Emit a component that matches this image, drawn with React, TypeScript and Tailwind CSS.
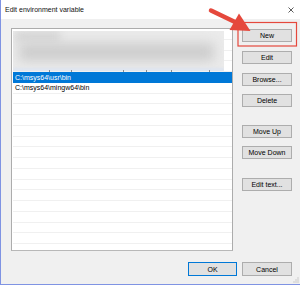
import React from "react";

function Btn({ label, className = "" }: { label: string; className?: string }) {
  return (
    <div
      className={
        "h-[13px] w-[50px] bg-[#e1e1e1] border border-[#adadad] flex items-center justify-center text-[7px] text-black " +
        className
      }
    >
      {label}
    </div>
  );
}

export default function App() {
  const emptyRows = Array.from({ length: 17 });
  const specks = [36, 58, 110, 133, 158, 196];
  return (
    <div className="relative w-[300px] h-[285px] overflow-hidden bg-[#f0f0f0] border-l border-b border-[#7f93e3] font-['Liberation_Sans',Arial,sans-serif] text-[7px] leading-none text-black">
      {/* Title bar */}
      <div className="h-[19px] bg-white flex items-center justify-between pl-[4px] pr-[6px]">
        <span className="text-[7px] text-[#111]">Edit environment variable</span>
        <svg width="6" height="6" viewBox="0 0 6 6">
          <path d="M0.5 0.5 L5.5 5.5 M5.5 0.5 L0.5 5.5" stroke="#333" strokeWidth="0.8" />
        </svg>
      </div>

      {/* Body */}
      <div className="flex pl-[10px] pt-[9px]">
        <div className="w-[222px] h-[223px] border border-[#acacac] border-b-[#b8b8b8] bg-white overflow-hidden pl-[1px]">
          {/* blurred rows */}
          <div className="relative h-[43px]">
            {[0, 1, 2, 3].map((i) => (
              <div key={i} className="h-[10.75px] border-b border-[#f0f0f0]" />
            ))}
            <div className="absolute left-0 top-[2px] w-[211px] h-[40px] bg-[#ebebeb] overflow-hidden">
              <div className="absolute left-[2px] top-[1px] w-[45px] h-[9px] bg-[#d2d2d2] blur-[4px]" />
              <div className="absolute left-[6px] right-[10px] top-[12px] h-[18px] bg-[#cdcdcd] blur-[6px]" />
              <div className="absolute left-0 right-0 bottom-0 h-[3px] bg-[#dde4f0] blur-[1px]" />
            </div>
            {specks.map((x) => (
              <div
                key={x}
                className="absolute top-[41px] w-[1px] h-[2px] bg-[#8a8a8a]"
                style={{ left: x }}
              />
            ))}
          </div>
          {/* selected row */}
          <div className="h-[10.75px] bg-[#0078d7] text-white flex items-center pl-[2px]">
            C:\msys64\usr\bin
          </div>
          <div className="h-[10.75px] border-b border-[#f0f0f0] flex items-center pl-[2px]">
            C:\msys64\mingw64\bin
          </div>
          {emptyRows.map((_, i) => (
            <div key={i} className="h-[10.75px] border-b border-[#f0f0f0]" />
          ))}
        </div>

        <div className="ml-[9px] w-[50px] pt-[1px] flex flex-col">
          <Btn label="New" />
          <Btn label="Edit" className="mt-[9px]" />
          <Btn label="Browse..." className="mt-[9px]" />
          <Btn label="Delete" className="mt-[8px]" />
          <Btn label="Move Up" className="mt-[18px]" />
          <Btn label="Move Down" className="mt-[8px]" />
          <Btn label="Edit text..." className="mt-[19px]" />
        </div>
      </div>

      {/* Bottom buttons */}
      <div className="flex justify-end gap-[5px] pr-[8px] mt-[11px]">
        <div className="h-[14px] w-[49px] bg-[#e1e1e1] border border-[#0078d7] flex items-center justify-center">
          OK
        </div>
        <div className="h-[14px] w-[50px] bg-[#e1e1e1] border border-[#adadad] flex items-center justify-center">
          Cancel
        </div>
      </div>

      {/* resize grip */}
      <svg className="absolute right-[1px] bottom-[1px]" width="6" height="6" viewBox="0 0 6 6">
        <rect x="4.5" y="0.5" width="1" height="1" fill="#a8a8a8" />
        <rect x="4.5" y="2.5" width="1" height="1" fill="#a8a8a8" />
        <rect x="2.5" y="2.5" width="1" height="1" fill="#a8a8a8" />
        <rect x="4.5" y="4.5" width="1" height="1" fill="#a8a8a8" />
        <rect x="2.5" y="4.5" width="1" height="1" fill="#a8a8a8" />
        <rect x="0.5" y="4.5" width="1" height="1" fill="#a8a8a8" />
      </svg>

      {/* annotation overlay */}
      <svg
        className="absolute left-0 top-0 pointer-events-none"
        width="300"
        height="285"
        viewBox="0 0 300 285"
      >
        <rect x="237" y="22.5" width="58.5" height="23.5" fill="none" stroke="#e5483c" strokeWidth="1.2" />
        <line x1="210" y1="10.5" x2="234" y2="22" stroke="#e5483c" strokeWidth="4.5" strokeLinecap="round" />
        <polygon points="238,13.5 249.5,31 228.5,30" fill="#e5483c" />
      </svg>
    </div>
  );
}
